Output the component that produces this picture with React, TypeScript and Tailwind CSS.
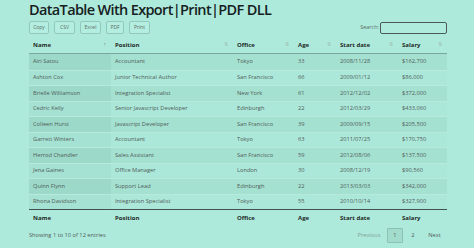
import React from "react";

const rows = [
  ["Airi Satou", "Accountant", "Tokyo", "33", "2008/11/28", "$162,700"],
  ["Ashton Cox", "Junior Technical Author", "San Francisco", "66", "2009/01/12", "$86,000"],
  ["Brielle Williamson", "Integration Specialist", "New York", "61", "2012/12/02", "$372,000"],
  ["Cedric Kelly", "Senior Javascript Developer", "Edinburgh", "22", "2012/03/29", "$433,060"],
  ["Colleen Hurst", "Javascript Developer", "San Francisco", "39", "2009/09/15", "$205,500"],
  ["Garrett Winters", "Accountant", "Tokyo", "63", "2011/07/25", "$170,750"],
  ["Herrod Chandler", "Sales Assistant", "San Francisco", "59", "2012/08/06", "$137,500"],
  ["Jena Gaines", "Office Manager", "London", "30", "2008/12/19", "$90,560"],
  ["Quinn Flynn", "Support Lead", "Edinburgh", "22", "2013/03/03", "$342,000"],
  ["Rhona Davidson", "Integration Specialist", "Tokyo", "55", "2010/10/14", "$327,900"],
];

const heads = ["Name", "Position", "Office", "Age", "Start date", "Salary"];
const widths = ["w-[82px]", "w-[122px]", "w-[61px]", "w-[42px]", "w-[62px]", "w-[49px]"];

export default function App() {
  return (
    <div className="w-[474px] h-[248px] overflow-hidden bg-[#aeeadb] text-[#3d4a47] font-['Open_Sans',sans-serif]">
      <div className="pl-[29px] w-[447px]">
        <h1 className="h-[20px] leading-[20px] text-[14.5px] font-semibold text-[#16211f] tracking-[-0.65px] whitespace-nowrap">
          DataTable With Export|Print|PDF DLL
        </h1>
        <div className="mt-[1px] h-[13px] flex items-center justify-between">
          <div className="flex gap-[5px]">
            {["Copy", "CSV", "Excel", "PDF", "Print"].map((b, i) => (
              <div
                key={b}
                className={`${["w-[20px]", "w-[21px]", "w-[21px]", "w-[18px]", "w-[21px]"][i]} h-[13px] rounded-[2px] border border-[#93c9bb] bg-[#b4eee0] text-[5px] leading-[11px] text-center text-[#5b6b67]`}
              >
                {b}
              </div>
            ))}
          </div>
          <div className="flex items-center">
            <span className="text-[5.5px] text-[#5b6b67] mr-[1px]">Search:</span>
            <div className="w-[67px] h-[12px] rounded-[2px] border border-[#4a5a57] bg-[#b0ecdd]" />
          </div>
        </div>
        <div className="mt-[3px] w-[418px]">
          <div className="flex h-[17px] border-b border-[#7aa79b] text-[6px] font-bold text-[#1f2a28]">
            {heads.map((h, i) => (
              <div key={h} className={`${widths[i]} flex items-center justify-between pl-[4px] pr-[5px]`}>
                <span>{h}</span>
                <span className={`text-[5px] ${i === 0 ? "text-[#6b7f7a]" : "text-[#9fc9bd]"}`}>{i === 0 ? "↑" : "⇅"}</span>
              </div>
            ))}
          </div>
          {rows.map((r, ri) => (
            <div
              key={ri}
              className={`flex h-[15.5px] text-[5.7px] text-[#4f5d5a] ${ri > 0 ? "border-t border-[#b6eadd]" : ""} ${ri % 2 === 0 ? "bg-[#a5e1d1]" : "bg-[#ace8d9]"}`}
            >
              {r.map((c, ci) => (
                <div
                  key={ci}
                  className={`${widths[ci]} flex items-center pl-[4px] ${ci === 0 ? (ri % 2 === 0 ? "bg-[#9dd9c9]" : "bg-[#a6e2d3]") : ""}`}
                >
                  {c}
                </div>
              ))}
            </div>
          ))}
          <div className="flex h-[17px] border-t border-[#41524e] text-[6px] font-bold text-[#1f2a28]">
            {heads.map((h, i) => (
              <div key={h} className={`${widths[i]} flex items-center pl-[4px]`}>
                {h}
              </div>
            ))}
          </div>
        </div>
        <div className="mt-[1px] flex items-center w-[418px] h-[16px] text-[5.7px] text-[#4f5d5a]">
          <span className="flex-1">Showing 1 to 10 of 12 entries</span>
          <span className="w-[24px] text-center text-[#7f9f97]">Previous</span>
          <div className="ml-[6px] w-[16px] h-[15px] border border-[#8cc2b4] bg-[#a2dccd] rounded-[1px] flex items-center justify-center">1</div>
          <span className="ml-[2px] w-[16px] text-center">2</span>
          <span className="ml-[7px] w-[13px] text-center">Next</span>
          <span className="w-[6px]" />
        </div>
      </div>
    </div>
  );
}
